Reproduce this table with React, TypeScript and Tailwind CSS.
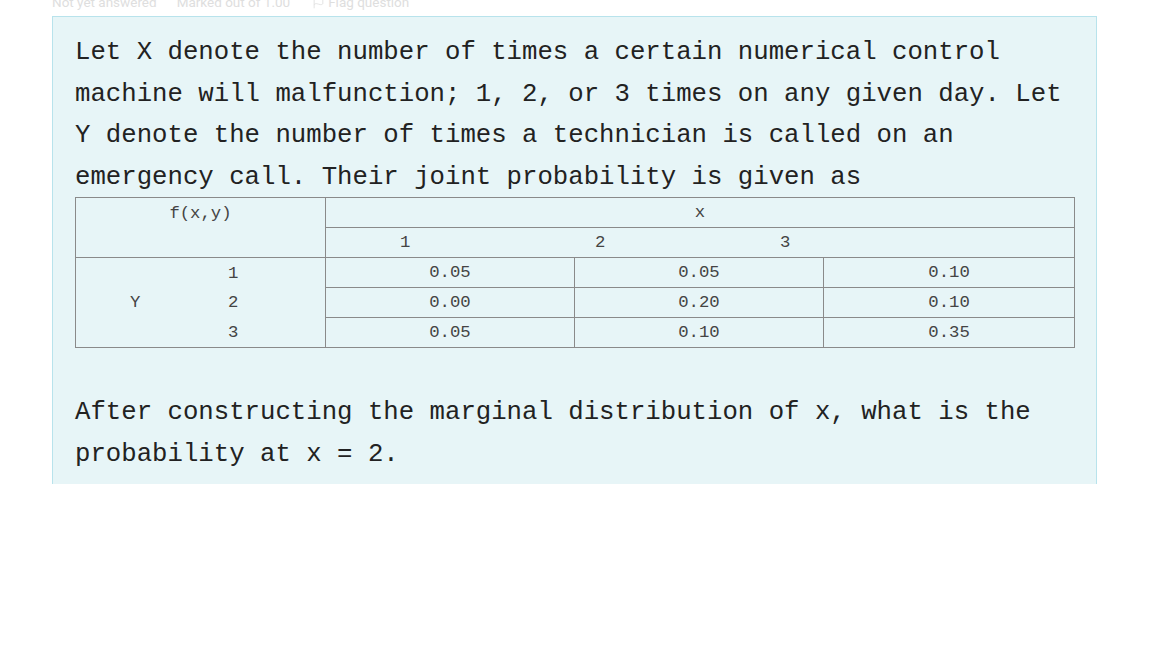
import { Flag } from "lucide-react";

const mono = "font-['Liberation_Mono','Courier_New',monospace]";

const rows = [
  { y: "1", label: "", vals: ["0.05", "0.05", "0.10"] },
  { y: "2", label: "Y", vals: ["0.00", "0.20", "0.10"] },
  { y: "3", label: "", vals: ["0.05", "0.10", "0.35"] },
];

function JointTable() {
  const cell = "h-[29px] border border-[#8a8a8a] p-0 text-center align-middle";
  return (
    <table className={`w-[999px] table-fixed border-collapse text-[17.3px] leading-[29px] text-[#444] ${mono}`}>
      <colgroup>
        <col className="w-[250px]" />
        <col className="w-[249px]" />
        <col className="w-[249px]" />
        <col className="w-[251px]" />
      </colgroup>
      <tbody>
        <tr>
          <td className={`${cell} border-b-0`}>f(x,y)</td>
          <td colSpan={3} className={cell}>x</td>
        </tr>
        <tr>
          <td className={`${cell} border-t-0`}></td>
          <td colSpan={3} className={`${cell} text-left`}>
            <span className="ml-[74px] inline-block w-[195px]">1</span>
            <span className="inline-block w-[185px]">2</span>
            <span className="inline-block">3</span>
          </td>
        </tr>
        {rows.map((r, i) => (
          <tr key={r.y}>
            <td
              className={`${cell} text-left ${i > 0 ? "border-t-0" : ""} ${i < 2 ? "border-b-0" : ""}`}
            >
              <div className="flex">
                <span className="ml-[54px] inline-block w-[98px]">{r.label}</span>
                <span>{r.y}</span>
              </div>
            </td>
            {r.vals.map((v, j) => (
              <td key={j} className={cell}>
                {v}
              </td>
            ))}
          </tr>
        ))}
      </tbody>
    </table>
  );
}

export default function App() {
  return (
    <div className="min-h-[648px] bg-white">
      <div className="h-4 overflow-hidden">
        <div className="-mt-[4px] ml-[52px] flex items-start text-[13.5px] leading-[13.5px] text-[#dedede] font-['Roboto',sans-serif]">
          <span>Not yet answered</span>
          <span className="ml-[20px]">Marked out of 1.00</span>
          <span className="ml-[22px] flex items-start gap-[3px]">
            <Flag className="h-[13px] w-[13px]" strokeWidth={1.5} />
            Flag question
          </span>
        </div>
      </div>

      <div
        className={`ml-[52px] w-[1045px] border border-b-0 border-[#b8e3ec] bg-[#e7f5f7] px-[22px] pb-[9px] pt-[15px] text-[25.7px] leading-[41.6px] text-[#222] ${mono}`}
      >
        <p>
          Let X denote the number of times a certain numerical control machine will malfunction; 1, 2,
          or 3 times on any given day. Let Y denote the number of times a technician is called on an
          emergency call. Their joint probability is given as
        </p>
        <div className="-mt-[1px]">
          <JointTable />
        </div>
        <p className="mt-[2px]">&nbsp;</p>
        <p>
          After constructing the marginal distribution of x, what is the probability at x = 2.
        </p>
      </div>
    </div>
  );
}
